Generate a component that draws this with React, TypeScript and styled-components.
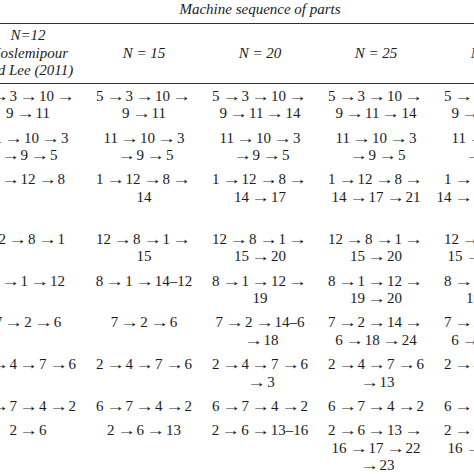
import React from "react";
import styled, { createGlobalStyle } from "styled-components";

const GlobalStyle = createGlobalStyle`
  html, body {
    margin: 0;
    padding: 0;
    background: #fff;
  }
  body {
    font-family: "Liberation Serif", "Times New Roman", serif;
    color: #1c1c1c;
  }
`;

const headers: string[][] = [
  ["N=12", "Moslemipour", "and Lee (2011)"],
  ["N = 15"],
  ["N = 20"],
  ["N = 25"],
  ["N = 30"],
];

// each row: one entry per column, each entry split into its lines
const rows: string[][][] = [
  [
    ["5 → 3 → 10 →", "9 → 11"],
    ["5 → 3 → 10 →", "9 → 11"],
    ["5 → 3 → 10 →", "9 → 11 → 14"],
    ["5 → 3 → 10 →", "9 → 11 → 14"],
    ["5 → 3 → 10 →", "9 → 11 → 14"],
  ],
  [
    ["11 → 10 → 3", "→ 9 → 5"],
    ["11 → 10 → 3", "→ 9 → 5"],
    ["11 → 10 → 3", "→ 9 → 5"],
    ["11 → 10 → 3", "→ 9 → 5"],
    ["11 → 10 → 3", "→ 9 → 5"],
  ],
  [
    ["1 → 12 → 8"],
    ["1 → 12 → 8 →", "14"],
    ["1 → 12 → 8 →", "14 → 17"],
    ["1 → 12 → 8 →", "14 → 17 → 21"],
    ["1 → 12 → 8 →", "14 → 17 → 21 →", "26"],
  ],
  [
    ["12 → 8 → 1"],
    ["12 → 8 → 1 →", "15"],
    ["12 → 8 → 1 →", "15 → 20"],
    ["12 → 8 → 1 →", "15 → 20"],
    ["12 → 8 → 1 →", "15 → 20 → 27"],
  ],
  [
    ["8 → 1 → 12"],
    ["8 → 1 → 14–12"],
    ["8 → 1 → 12 →", "19"],
    ["8 → 1 → 12 →", "19 → 20"],
    ["8 → 1 → 12 →", "19 → 20"],
  ],
  [
    ["7 → 2 → 6"],
    ["7 → 2 → 6"],
    ["7 → 2 → 14–6", "→ 18"],
    ["7 → 2 → 14 →", "6 → 18 → 24"],
    ["7 → 2 → 14 →", "6 → 18 → 24"],
  ],
  [
    ["2 → 4 → 7 → 6"],
    ["2 → 4 → 7 → 6"],
    ["2 → 4 → 7 → 6", "→ 3"],
    ["2 → 4 → 7 → 6", "→ 13"],
    ["2 → 4 → 7 → 6"],
  ],
  [
    ["6 → 7 → 4 → 2"],
    ["6 → 7 → 4 → 2"],
    ["6 → 7 → 4 → 2"],
    ["6 → 7 → 4 → 2"],
    ["6 → 7 → 4 → 2"],
  ],
  [
    ["2 → 6"],
    ["2 → 6 → 13"],
    ["2 → 6 → 13–16"],
    ["2 → 6 → 13 →", "16 → 17 → 22", "→ 23"],
    ["2 → 6 → 13 →", "16 → 17 → 22", "→ 23"],
  ],
];

// numbers and arrows; the arrow carries its own side spacing
const Sequence = ({ text }: { text: string }) => {
  const parts = text.split("→").map((p) => p.trim());
  return (
    <Line>
      {parts.map((p, i) => (
        <React.Fragment key={i}>
          {i > 0 && (
            <Arrow>
              <Glyph>→</Glyph>
            </Arrow>
          )}
          {p}
        </React.Fragment>
      ))}
    </Line>
  );
};

const App = () => {
  return (
    <>
      <GlobalStyle />
      <Frame>
        <Table>
          <colgroup>
            {headers.map((_, i) => (
              <col key={i} />
            ))}
          </colgroup>
          <thead>
            <tr>
              <GroupHead colSpan={headers.length}>
                Machine sequence of parts
              </GroupHead>
            </tr>
            <tr>
              {headers.map((h, i) => (
                <ColHead key={i}>
                  {h.map((line, j) => (
                    <Line key={j}>{line}</Line>
                  ))}
                </ColHead>
              ))}
            </tr>
          </thead>
          <tbody>
            {rows.map((row, r) => (
              <tr key={r}>
                {row.map((cell, c) => (
                  <Cell key={c}>
                    {cell.map((line, j) => (
                      <Sequence key={j} text={line} />
                    ))}
                  </Cell>
                ))}
              </tr>
            ))}
          </tbody>
        </Table>
      </Frame>
    </>
  );
};

export default App;

const Frame = styled.div`
  width: 474px;
  height: 474px;
  overflow: hidden;
  background: #fff;
`;

const Table = styled.table`
  border-collapse: collapse;
  table-layout: fixed;
  width: 580px;
  margin-left: -30px;
  font-size: 15px;
  line-height: 17.5px;

  col {
    width: 116px;
  }
`;

const GroupHead = styled.th`
  font-weight: normal;
  font-style: italic;
  text-align: center;
  padding: 1px 0 4px;
  border-bottom: 1.5px solid #333;
`;

const ColHead = styled.th`
  font-weight: normal;
  font-style: italic;
  text-align: center;
  vertical-align: middle;
  padding: 3.5px 0 3.5px;
  border-bottom: 1.5px solid #333;
`;

const Cell = styled.td`
  text-align: center;
  vertical-align: top;
  padding: 3.9px 0 2.9px;
`;

const Line = styled.span`
  display: block;
  white-space: nowrap;
`;

const Arrow = styled.span`
  display: inline-block;
  padding: 0 3px 0 4px;
`;

const Glyph = styled.span`
  display: inline-block;
  transform: scaleX(1.25);
`;
